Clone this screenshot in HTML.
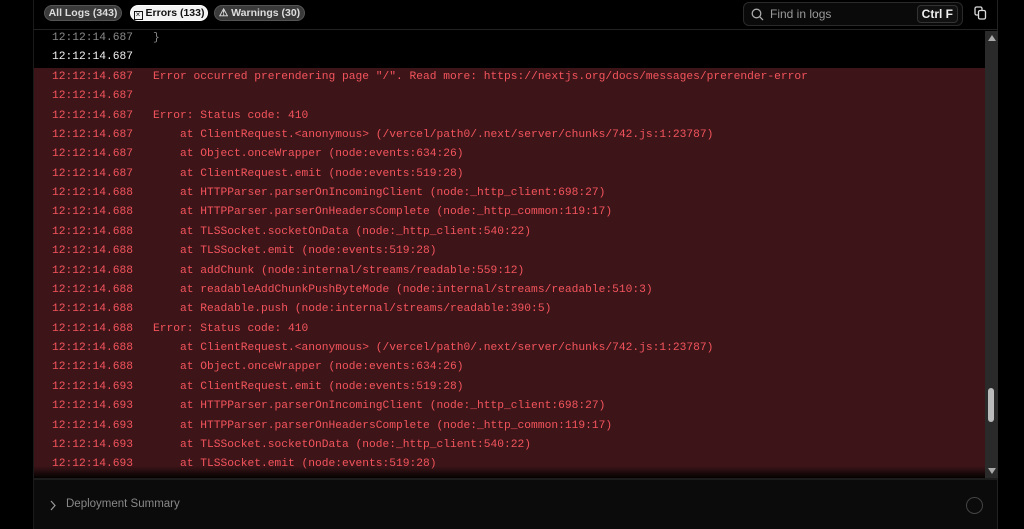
<!DOCTYPE html>
<html><head><style>
*{margin:0;padding:0;box-sizing:border-box}
body{width:1024px;height:529px;background:#000;position:relative;overflow:hidden;font-family:"Liberation Sans",sans-serif}
.panel{position:absolute;left:33px;top:0;width:965px;height:529px;background:#000;border-left:1px solid #1a1a1a;border-right:1px solid #222}
.hdr{position:absolute;left:0;top:0;width:100%;height:30px;border-bottom:1px solid #222;background:#000}
.pill{position:absolute;top:5px;height:16px;border-radius:8px;font-size:10.5px;line-height:15px;text-align:center;font-weight:bold;color:#ddd;background:#3a3a3a;border:1px solid #555}
.search{position:absolute;left:709px;top:2px;width:220px;height:24px;border:1px solid #2a2a2a;border-radius:6px;background:#0a0a0a}
.search span{position:absolute;left:26px;top:4px;font-size:12px;color:#999}
.kbd{position:absolute;right:4px;top:2px;height:18px;padding:0 4px;border:1px solid #333;border-radius:4px;background:#111;color:#eee;font-size:12px;line-height:17px;font-weight:bold}
.logs{position:absolute;left:0;top:29px;width:951px;height:449px;overflow:hidden}
.row{height:19.38px;line-height:19.38px;font-family:"Liberation Mono",monospace;font-size:11.25px;white-space:pre;padding-left:18px;color:#f4545c}
.row b{font-weight:normal;display:inline-block;width:101px}
.err{background:#3d1519}
.fade{position:absolute;left:0;top:466px;width:951px;height:12px;background:linear-gradient(rgba(0,0,0,0),rgba(0,0,0,.95))}
.sb{position:absolute;left:951px;top:31px;width:13px;height:447px;background:#2a2a2a}
.foot{position:absolute;left:0;top:478px;width:963px;height:51px;background:#0b0b0b;border-top:2px solid #1c1c1c}
</style></head><body>
<div class="panel">
<div class="hdr">
<div class="pill" style="left:10px;width:78px">All Logs (343)</div>
<div class="pill" style="left:96px;width:78px;background:#f2f2f2;color:#111;border-color:#fff"><span style="display:inline-block;width:9px;height:9px;border:1.2px solid #111;font-size:8px;line-height:6px;vertical-align:-1px;margin-right:3px;font-weight:normal">×</span>Errors (133)</div>
<div class="pill" style="left:180px;width:91px">⚠ Warnings (30)</div>
<div class="search"><svg style="position:absolute;left:7px;top:5px" width="13" height="13" viewBox="0 0 13 13"><circle cx="5.5" cy="5.5" r="4.3" fill="none" stroke="#aaa" stroke-width="1.3"/><path d="M8.7 8.7L12 12" stroke="#aaa" stroke-width="1.3"/></svg><span>Find in logs</span><div class="kbd">Ctrl F</div></div>
<svg style="position:absolute;left:940px;top:6px" width="13" height="14" viewBox="0 0 13 14"><rect x="1" y="1" width="7" height="8" rx="1.5" fill="none" stroke="#ddd" stroke-width="1.3"/><rect x="4.5" y="4.5" width="7" height="8.5" rx="1.5" fill="#000" stroke="#ddd" stroke-width="1.3"/></svg>
</div>
<div class="logs">
<div class="row" style="color:#8a8a8a"><b>12:12:14.687</b>}</div>
<div class="row" style="color:#f2f2f2"><b>12:12:14.687</b></div>
<div class="row err"><b>12:12:14.687</b>Error occurred prerendering page "/". Read more: https://nextjs.org/docs/messages/prerender-error</div>
<div class="row err"><b>12:12:14.687</b></div>
<div class="row err"><b>12:12:14.687</b>Error: Status code: 410</div>
<div class="row err"><b>12:12:14.687</b>    at ClientRequest.&lt;anonymous&gt; (/vercel/path0/.next/server/chunks/742.js:1:23787)</div>
<div class="row err"><b>12:12:14.687</b>    at Object.onceWrapper (node:events:634:26)</div>
<div class="row err"><b>12:12:14.687</b>    at ClientRequest.emit (node:events:519:28)</div>
<div class="row err"><b>12:12:14.688</b>    at HTTPParser.parserOnIncomingClient (node:_http_client:698:27)</div>
<div class="row err"><b>12:12:14.688</b>    at HTTPParser.parserOnHeadersComplete (node:_http_common:119:17)</div>
<div class="row err"><b>12:12:14.688</b>    at TLSSocket.socketOnData (node:_http_client:540:22)</div>
<div class="row err"><b>12:12:14.688</b>    at TLSSocket.emit (node:events:519:28)</div>
<div class="row err"><b>12:12:14.688</b>    at addChunk (node:internal/streams/readable:559:12)</div>
<div class="row err"><b>12:12:14.688</b>    at readableAddChunkPushByteMode (node:internal/streams/readable:510:3)</div>
<div class="row err"><b>12:12:14.688</b>    at Readable.push (node:internal/streams/readable:390:5)</div>
<div class="row err"><b>12:12:14.688</b>Error: Status code: 410</div>
<div class="row err"><b>12:12:14.688</b>    at ClientRequest.&lt;anonymous&gt; (/vercel/path0/.next/server/chunks/742.js:1:23787)</div>
<div class="row err"><b>12:12:14.688</b>    at Object.onceWrapper (node:events:634:26)</div>
<div class="row err"><b>12:12:14.693</b>    at ClientRequest.emit (node:events:519:28)</div>
<div class="row err"><b>12:12:14.693</b>    at HTTPParser.parserOnIncomingClient (node:_http_client:698:27)</div>
<div class="row err"><b>12:12:14.693</b>    at HTTPParser.parserOnHeadersComplete (node:_http_common:119:17)</div>
<div class="row err"><b>12:12:14.693</b>    at TLSSocket.socketOnData (node:_http_client:540:22)</div>
<div class="row err"><b>12:12:14.693</b>    at TLSSocket.emit (node:events:519:28)</div>
<div class="row err"><b>12:12:14.693</b>    at TLSSocket.emit (node:events:519:28)</div>
</div>
<div class="fade"></div>
<div class="sb">
<div style="position:absolute;left:3px;top:4px;width:0;height:0;border-left:4px solid transparent;border-right:4px solid transparent;border-bottom:6px solid #aaa"></div>
<div style="position:absolute;left:3px;top:357px;width:6px;height:34px;border-radius:3px;background:#bbb"></div>
<div style="position:absolute;left:3px;top:437px;width:0;height:0;border-left:4px solid transparent;border-right:4px solid transparent;border-top:6px solid #aaa"></div>
</div>
<div class="foot">
<svg style="position:absolute;left:15px;top:20px" width="8" height="11" viewBox="0 0 8 11"><path d="M2 1l4 4.5L2 10" fill="none" stroke="#999" stroke-width="1.2"/></svg>
<span style="position:absolute;left:32px;top:18px;font-size:11.5px;color:#888">Deployment Summary</span>
<div style="position:absolute;left:932px;top:17px;width:17px;height:17px;border-radius:50%;border:1.3px solid #444"></div>
</div>
</div>
</body></html>
